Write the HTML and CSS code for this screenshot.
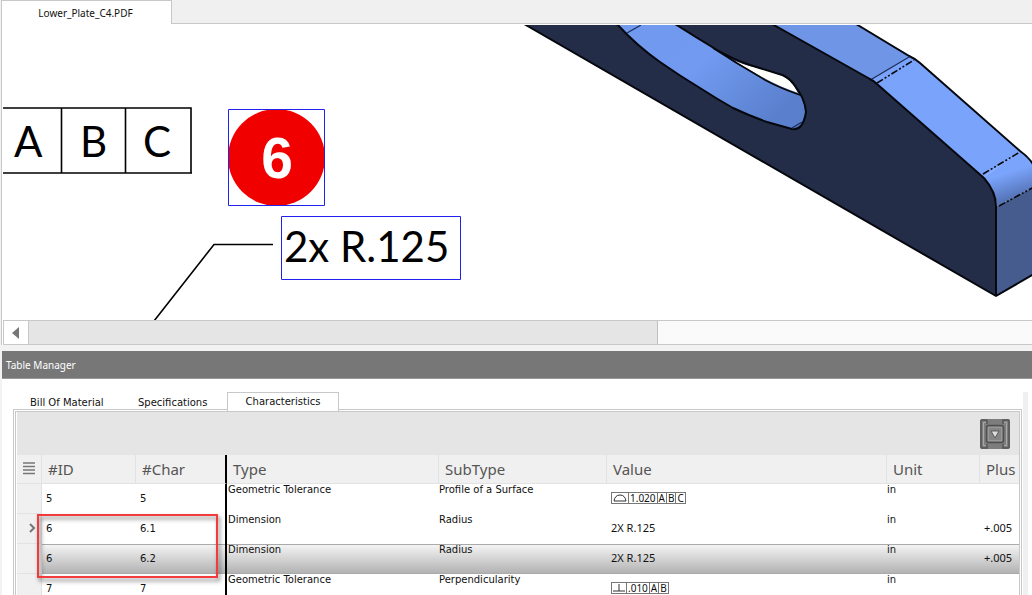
FILE: index.html
```html
<!DOCTYPE html>
<html lang="en">
<head>
<meta charset="utf-8">
<title>Lower_Plate_C4.PDF</title>
<link rel="stylesheet" href="styles.css">
</head>
<body>
<main class="app">
  <section class="document">
    <div class="doc-tabs">
      <button class="doc-tab" type="button">Lower_Plate_C4.PDF</button>
      <div class="doc-tabs-rest"></div>
    </div>
    <svg class="drawing" role="img" aria-label="Part drawing">
      <defs>
        <linearGradient id="slot" x1="0" y1="0" x2="1" y2="0.6">
          <stop offset="0" stop-color="#7199ee"/><stop offset="0.5" stop-color="#719af0"/><stop offset="1" stop-color="#5a80cd"/>
        </linearGradient>
        <linearGradient id="fillet" x1="0.3" y1="0" x2="0.6" y2="1">
          <stop offset="0" stop-color="#7aa4fc"/><stop offset="0.4" stop-color="#7ba5fd"/><stop offset="1" stop-color="#4a65a2"/>
        </linearGradient>
      </defs>
      <g transform="translate(-2 -24)">
        <g fill="none" stroke="#000" stroke-width="2">
          <path d="M3 108H191V173M61.500 108V173M125.500 108V173M3 173H192" stroke-width="1.600"/>
          <path d="M154 321L214 244.500H273" stroke-width="1.600"/>
        </g>
        <g class="drawing-text">
          <text x="14" y="157">A</text>
          <text x="80" y="157">B</text>
          <text x="143" y="157">C</text>
          <text x="284" y="262">2x R.125</text>
        </g>
        <circle cx="276.500" cy="157.500" r="48.500" fill="#f10000"/>
        <text class="balloon" x="277" y="178">6</text>
        <g fill="none" stroke="#2222ee">
          <path d="M228.500 109.500H324.500V205.500H228.500Z"/>
          <path d="M281.500 216.500H460.500V279.500H281.500Z"/>
        </g>
        <g stroke-linejoin="round">
          <path fill="#232d47" d="M524 24L996 296V206Q996 192 984 178L877 84Q874 81 870 79L772 24Z"/>
          <path fill="#6f96e6" d="M772 24L872 80L911 56L856 24Z"/>
          <path fill="#7aa4fc" d="M872 80Q876 82 879 85L984 177L1020 151L915 59L909 55Z"/>
          <path fill="url(#fillet)" d="M984 177Q996 191 997 206L1034 187V166Q1030 158 1020 151Z"/>
          <path fill="#465b8e" d="M997 206L1034 187V274L997 296Z"/>
          <path fill="url(#slot)" d="M617 24Q636 45 660 62Q680 76 700 88Q717 99 733 108Q750 116 767 122L792 129Q803 131 806 112Q805 98 793 83Q787 76 779 74L750 65Q735 60 717 50Q697 38 675 24Z"/>
          <path fill="#232d47" d="M713 48Q735 60 755 67L779 74Q793 79 800 94L765 79L735 63Z"/>
          <path fill="#fefefb" d="M731 59Q741 64 754 67L777 73Q790 77 798 93Q778 86 762 77Z"/>
          <g fill="none" stroke="#05070d" stroke-width="2">
            <path d="M524 24L996 296L1034 274M996 296V206Q996 192 984 178L877 84Q874 81 870 79L772 24M856 24L909 56Q914 58 920 63L1020 151Q1030 158 1034 166"/>
            <path d="M617 24Q636 45 660 62Q680 76 700 88Q717 99 733 108Q750 116 767 122L792 129Q803 131 806 112Q805 98 793 83Q787 76 779 74L750 65Q735 60 717 50Q697 38 675 24"/>
            <path d="M713 48L740 65L765 80Q780 88 800 95" stroke-width="1.500"/>
            <path d="M627 33L641 25M872 79L909 57M792 128L802 122" stroke="#1b2c59" stroke-width="1.300"/>
            <path d="M877 83L914 60M983 174L1020 152M999 206L1034 187" stroke-dasharray="7 2 2 2 2 2" stroke-width="1.600"/>
          </g>
          <path d="M500 24.500H1034" stroke="#fff"/>
        </g>
      </g>
    </svg>
    <div class="scrollbar">
      <button class="scroll-left" type="button" aria-label="Scroll left">
        <svg width="8" height="14"><path d="M7 1V13L0 7Z" fill="#777"/></svg>
      </button>
      <div class="scroll-thumb"></div>
      <div class="scroll-track"></div>
    </div>
  </section>

  <section class="manager">
    <h2 class="manager-title">Table Manager</h2>
    <div class="manager-body">
      <div class="pane">
        <div class="tabs" role="tablist">
          <button class="tab tab-bill" type="button" role="tab">Bill Of Material</button>
          <button class="tab tab-spec" type="button" role="tab">Specifications</button>
          <button class="tab tab-active" type="button" role="tab" aria-selected="true">Characteristics</button>
        </div>
        <div class="grid-frame">
          <div class="grid">
            <div class="toolbar">
              <button class="tool" type="button" aria-label="Expand">
                <svg width="30" height="30">
                  <rect width="30" height="30" rx="2" fill="#7d7d7d"/>
                  <path d="M7 1H2Q1 1 1 2V28Q1 29 2 29H7V25M7 1V5M23 5V1H28Q29 1 29 2V28Q29 29 28 29H23V25" fill="none" stroke="#555" stroke-width="1.500"/>
                  <path d="M6 3.500H3.500V26.500H6M24 3.500H26.500V26.500H24" fill="none" stroke="#a8a8a8"/>
                  <rect x="6.500" y="6.500" width="17" height="17" rx="2" fill="#858585" stroke="#505050" stroke-width="1.500"/>
                  <rect x="8.500" y="8.500" width="13" height="13" fill="none" stroke="#999"/>
                  <path d="M11 12H19L15 19Z" fill="#ddd" stroke="#5b5b5b"/>
                </svg>
              </button>
            </div>
            <table class="table">
              <colgroup>
                <col class="c-mark"><col class="c-id"><col class="c-char"><col class="c-type"><col class="c-sub"><col class="c-value"><col class="c-unit"><col class="c-plus">
              </colgroup>
              <thead>
                <tr>
                  <th class="mark"><svg class="lines" width="12" height="13"><path d="M0 1H12M0 4.500H12M0 8H12M0 11.500H12" stroke="#777" stroke-width="1.500"/></svg></th>
                  <th>#ID</th><th class="frozen">#Char</th><th>Type</th><th>SubType</th><th>Value</th><th>Unit</th><th>Plus Tol</th>
                </tr>
              </thead>
              <tbody>
                <tr>
                  <td class="mark"></td><td>5</td><td class="frozen">5</td><td class="top kind">Geometric Tolerance</td><td class="top">Profile of a Surface</td>
                  <td class="value"><span class="fcf"><span><svg width="14" height="9"><path d="M1 8H13Q12 2 7 2T1 8Z" fill="none" stroke="#333"/></svg></span><span>1.020</span><span>A</span><span>B</span><span>C</span></span></td>
                  <td class="top">in</td><td></td>
                </tr>
                <tr>
                  <td class="mark"><svg class="arrow" width="6" height="10"><path d="M1 1L5 5L1 9" fill="none" stroke="#777" stroke-width="2"/></svg></td><td>6</td><td class="frozen">6.1</td><td class="top kind">Dimension</td><td class="top">Radius</td>
                  <td class="value">2X R.125</td><td class="top">in</td><td class="plus">+.005</td>
                </tr>
                <tr class="selected">
                  <td class="mark"></td><td>6</td><td class="frozen">6.2</td><td class="top kind">Dimension</td><td class="top">Radius</td>
                  <td class="value">2X R.125</td><td class="top">in</td><td class="plus">+.005</td>
                </tr>
                <tr>
                  <td class="mark"></td><td>7</td><td class="frozen">7</td><td class="top kind">Geometric Tolerance</td><td class="top">Perpendicularity</td>
                  <td class="value"><span class="fcf"><span><svg width="12" height="9"><path d="M0 8H12M6 8V1" fill="none" stroke="#333"/></svg></span><span>.010</span><span>A</span><span>B</span></span></td>
                  <td class="top">in</td><td></td>
                </tr>
              </tbody>
            </table>
            <div class="highlight"></div>
          </div>
        </div>
      </div>
      <div class="side-strip"></div>
    </div>
  </section>
</main>
</body>
</html>
```
FILE: styles.css
```css
* { box-sizing: border-box; }
body { margin: 0; background: #fff; font-family: "DejaVu Sans", sans-serif; font-size: 10px; color: #111; }
button { border: 0; padding: 0; background: none; font: inherit; color: inherit; }
.app { height: 100vh; display: flex; flex-direction: column; overflow: hidden; background: #f2f2f2; }

.document { margin-left: 1px; border-left: 1px solid #c8c8c8; background: #fff; display: flex; flex-direction: column; flex: none; }
.doc-tabs { display: flex; height: 24px; }
.doc-tab { width: 170px; border-top: 1px solid #c8c8c8; border-right: 1px solid #c8c8c8; font: 10px/20px "Noto Sans", sans-serif; padding: 0 2px 0 0; }
.doc-tabs-rest { flex: 1; background: #f0f0f0; border-bottom: 1px solid #c8c8c8; }
.drawing { display: block; width: 100%; height: 296px; }
.drawing-text { font-family: Lato, sans-serif; font-size: 42px; fill: #000; }
.balloon { font: bold 57px "Liberation Sans", sans-serif; fill: #fff; text-anchor: middle; }

.scrollbar { display: flex; height: 25px; margin-left: 1px; border: 1px solid #c8c8c8; border-right: 0; }
.scroll-left { width: 25px; border-right: 1px solid #c8c8c8; display: grid; place-items: center; background: #fff; }
.scroll-thumb { flex: 629; background: #e5e5e5; border-right: 1px solid #c0c0c0; }
.scroll-track { flex: 375; background: #fafafa; }

.manager { flex: 1; min-height: 0; display: flex; flex-direction: column; margin-top: 6px; margin-left: 2px; }
.manager-title { margin: 0; height: 28px; background: #777; border-bottom: 1px solid #999; color: #fff; font: 10px/28px "Noto Sans", sans-serif; padding-left: 4px; flex: none; }
.manager-body { flex: 1; min-height: 0; display: flex; background: #fff; padding: 13px 4px 0 11px; }
.pane { flex: 1; min-width: 0; display: flex; flex-direction: column; }
.side-strip { width: 5px; margin-left: 1px; background: #f0f0f0; }
.tabs { display: flex; height: 17px; }
.tab { text-align: left; line-height: 14px; padding-top: 4px; }
.tab-bill { width: 108px; padding-left: 17px; }
.tab-spec { width: 106px; padding-left: 17px; }
.tab-active { width: 112px; height: 19px; padding: 0; text-align: center; border: 1px solid #c8c8c8; border-bottom: 0; background: #fff; z-index: 1; }
.grid-frame { flex: 1; min-height: 0; border: 1px solid #c8c8c8; border-bottom: 0; padding: 1px 1px 0; display: flex; }
.grid { flex: 1; min-width: 0; border: 1px solid #c8c8c8; border-bottom: 0; overflow: hidden; position: relative; padding-left: 1px; }
.toolbar { height: 43px; background: #e5e5e5; display: flex; justify-content: flex-end; align-items: center; padding-right: 9px; }
.tool { height: 30px; }

.table { width: 100%; table-layout: fixed; border-collapse: separate; border-spacing: 0; }
.c-mark { width: 25px; }
.c-id { width: 94px; }
.c-char { width: 91px; }
.c-type { width: 212px; }
.c-sub { width: 168px; }
.c-unit { width: 93px; }
.c-plus { width: 39px; }
th { height: 29px; background: #f0f0f0; border-right: 1px solid #e2e2e2; border-bottom: 1px solid #e2e2e2; font: 15px/20px "Noto Sans", sans-serif; color: #555; text-align: left; padding: 0 0 1px 6px; white-space: nowrap; overflow: hidden; }
th:last-child { border-right: 0; }
td { height: 30px; padding: 0 0 1px 4px; background: #fff; line-height: 12px; white-space: nowrap; }
th.frozen, td.frozen { border-right: 2px solid #000; }
td.top { vertical-align: top; padding-left: 0; }
td.kind { padding-left: 1px; }
.mark { background: #f0f0f0; border-right: 1px solid #e2e2e2; border-bottom: 1px solid #e2e2e2; }
.lines { display: block; }
.arrow { display: block; margin-left: 8px; }
.value, .plus { font: 11px/12px "Noto Sans", sans-serif; padding-bottom: 3px; }
.selected td:not(.mark) { background: linear-gradient(#f6f6f6, #b0b0b0); box-shadow: inset 0 1px #aaa, inset 0 -1px #aaa; }
.fcf { display: inline-flex; border: 1px solid #777; border-right: 0; height: 12px; line-height: 10px; font-size: 10px; vertical-align: middle; }
.fcf span { border-right: 1px solid #777; padding: 0 1px; }
.fcf svg { display: block; }
.highlight { position: absolute; left: 21px; top: 102px; width: 181px; height: 64px; border: 2px solid #f33b3b; filter: drop-shadow(2px 3px 2px #0008); }
```
